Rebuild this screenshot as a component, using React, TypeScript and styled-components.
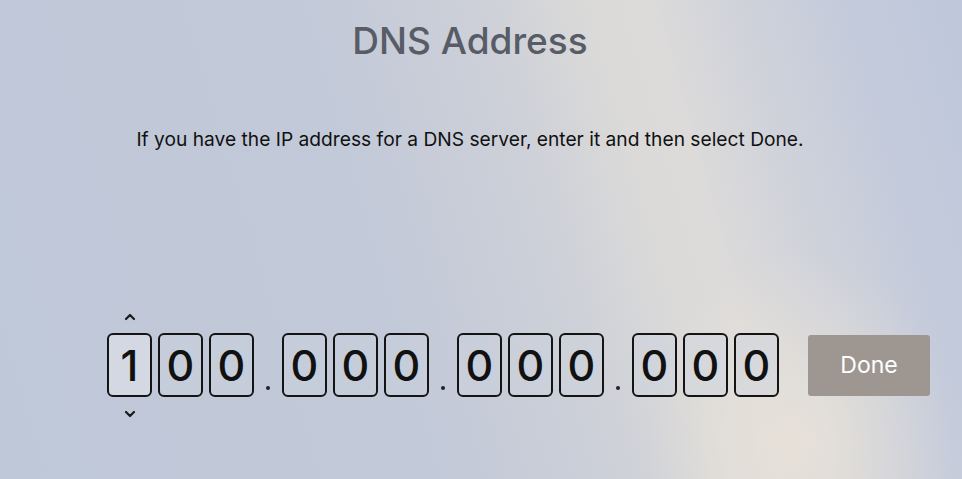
import styled, { createGlobalStyle } from "styled-components";

const GlobalStyle = createGlobalStyle`
  html, body {
    margin: 0;
    padding: 0;
    height: 100%;
    overflow: hidden;
  }
  body {
    font-family: Inter, "Liberation Sans", sans-serif;
  }
`;

const Screen = styled.div`
  width: 962px;
  height: 479px;
  box-sizing: border-box;
  padding-right: 22px;
  display: flex;
  flex-direction: column;
  align-items: center;
  background:
    radial-gradient(ellipse 150px 190px at 800px 440px, rgba(234, 227, 216, 0.8), rgba(234, 227, 216, 0) 100%),
    linear-gradient(74deg, #bfc8d9 0%, #c2c9d8 40%, #cdd0d8 56%, #dbdad9 66%, #dddbda 71%, #cfd2da 80%, #c3cadb 90%, #bec7db 100%);
`;

const Title = styled.h1`
  margin: 18px 0 0;
  font-size: 37px;
  font-weight: 500;
  color: #575c66;
`;

const Subtitle = styled.p`
  margin: 64px 0 0;
  font-size: 19.2px;
  font-weight: 400;
  color: #111;
`;

const Row = styled.div`
  align-self: flex-start;
  margin: 182px 0 0 107px;
  display: flex;
  align-items: center;
`;

const Group = styled.div`
  display: flex;
  gap: 6px;
`;

const Digit = styled.div<{ $focused?: boolean }>`
  position: relative;
  width: 45px;
  height: 64px;
  box-sizing: border-box;
  border: 2px solid #141414;
  border-radius: 6px;
  background: ${(p) => (p.$focused ? "#d3d8e3" : "rgba(205, 210, 222, 0.45)")};
  display: flex;
  align-items: center;
  justify-content: center;
  font-size: 43px;
  font-weight: 500;
  color: #111;
`;

const Dot = styled.div`
  width: 28px;
  align-self: stretch;
  display: flex;
  align-items: flex-end;
  justify-content: center;
  padding-bottom: 7px;
  box-sizing: border-box;

  &::after {
    content: "";
    width: 4px;
    height: 4px;
    border-radius: 50%;
    background: #222;
  }
`;

const Chevron = styled.svg<{ $down?: boolean }>`
  position: absolute;
  left: 50%;
  transform: translateX(-50%);
  ${(p) => (p.$down ? "bottom: -23px;" : "top: -22px;")}
`;

const DoneButton = styled.button`
  margin-left: 29px;
  width: 122px;
  height: 61px;
  border: none;
  border-radius: 3px;
  background: #9e9690;
  color: #fff;
  font-family: Inter, "Liberation Sans", sans-serif;
  font-size: 23px;
  font-weight: 400;
`;

const groups = [
  ["1", "0", "0"],
  ["0", "0", "0"],
  ["0", "0", "0"],
  ["0", "0", "0"],
];

const App = () => {
  return (
    <>
      <GlobalStyle />
      <Screen>
        <Title>DNS Address</Title>
        <Subtitle>
          If you have the IP address for a DNS server, enter it and then select Done.
        </Subtitle>
        <Row>
          {groups.map((digits, gi) => (
            <Group key={gi} style={{ display: "contents" }}>
              {gi > 0 && <Dot />}
              <Group>
                {digits.map((d, di) => {
                  const focused = gi === 0 && di === 0;
                  return (
                    <Digit key={di} $focused={focused}>
                      {focused && (
                        <Chevron width="12" height="8" viewBox="0 0 12 8">
                          <path d="M2 6 L6 2 L10 6" fill="none" stroke="#1a1a1a" strokeWidth="2.2" strokeLinecap="round" strokeLinejoin="round" />
                        </Chevron>
                      )}
                      {d}
                      {focused && (
                        <Chevron $down width="12" height="8" viewBox="0 0 12 8">
                          <path d="M2 2 L6 6 L10 2" fill="none" stroke="#1a1a1a" strokeWidth="2.2" strokeLinecap="round" strokeLinejoin="round" />
                        </Chevron>
                      )}
                    </Digit>
                  );
                })}
              </Group>
            </Group>
          ))}
          <DoneButton>Done</DoneButton>
        </Row>
      </Screen>
    </>
  );
};

export default App;
